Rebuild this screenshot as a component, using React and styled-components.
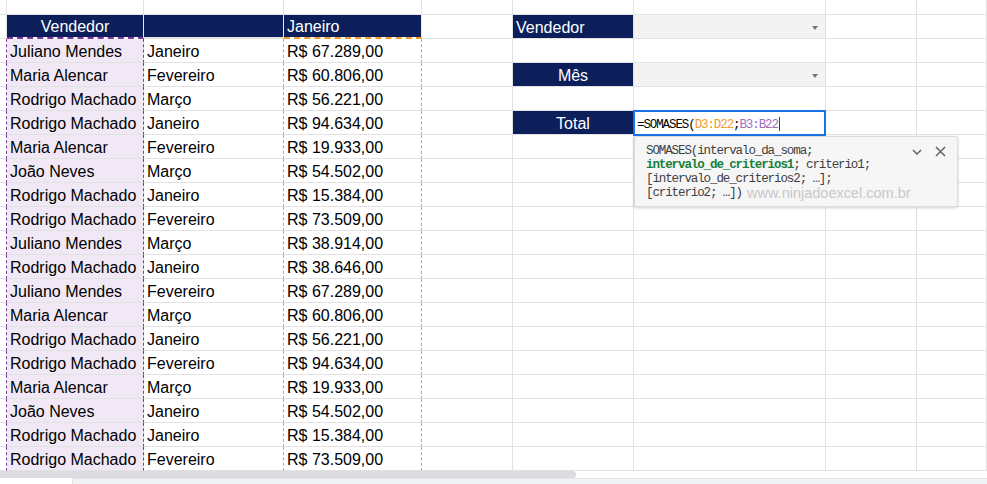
import React from 'react';
import styled, { createGlobalStyle } from 'styled-components';

const GRID = '#e2e2e2';
const NAVY = '#0c1f5b';
const LAVENDER = '#f0e9f5';
const PURPLE = '#7a3a99';
const ORANGE = '#f39a26';
const MONO = '"Liberation Mono", "DejaVu Sans Mono", monospace';

const GlobalStyle = createGlobalStyle`
	html, body {
		margin: 0;
		padding: 0;
		background: #fff;
		overflow: hidden;
	}
	body {
		font-family: "Liberation Sans", Arial, sans-serif;
	}
`;

const Page = styled.div`
	width: 987px;
	height: 484px;
	display: flex;
	flex-direction: column;
	overflow: hidden;
`;

const Sheet = styled.div`
	height: 471px;
	flex: none;
	display: grid;
	grid-template-columns: 7px 137px 140px 138px 91px 121px 192px 91px 70px;
	grid-template-rows: 15px 24px repeat(18, 24px);
	overflow: hidden;
`;

const Cell = styled.div`
	box-sizing: border-box;
	display: flex;
	align-items: flex-end;
	justify-content: ${props => props.$align === 'center' ? 'center' : 'flex-start'};
	padding: 0 3px 1px;
	border-right: 1px ${props => props.$edge ? `dashed ${props.$edge}` : `solid ${GRID}`};
	border-bottom: 1px solid ${GRID};
	background: ${props => props.$fill || 'transparent'};
	color: #000;
	font-size: 16px;
	line-height: 18px;
	white-space: nowrap;
	overflow: hidden;
`;

const NameCell = styled(Cell)`
	background: ${LAVENDER};
	border-right: 1px dashed ${PURPLE};
`;

const HeaderCell = styled(Cell)`
	background: ${NAVY};
	background-clip: padding-box;
	color: #fff;
	border-right-color: #e9e9ee;
	border-bottom: 2px ${props => props.$mark ? `dashed ${props.$mark}` : `solid ${GRID}`};
`;

const LabelCell = styled(Cell)`
	background: ${NAVY};
	color: #fff;
`;

const DropdownCell = styled(Cell)`
	background: #f3f3f3;
	justify-content: flex-end;
	align-items: center;
	padding: 3px 7px 0 0;
`;

const Arrow = styled.span`
	width: 0;
	height: 0;
	border-left: 3.5px solid transparent;
	border-right: 3.5px solid transparent;
	border-top: 4px solid #777;
`;

const FormulaCell = styled(Cell)`
	position: relative;
	overflow: visible;
	margin: -1px 0 -1px -1px;
	border: 2px solid #1a73e8;
	background: #fff;
	align-items: center;
	padding: 2px 0 0 2px;
	z-index: 3;
`;

const Code = styled.span`
	font-family: ${MONO};
	font-size: 12.5px;
	letter-spacing: -1.1px;
	color: ${props => props.$color || '#000'};
	font-weight: ${props => props.$bold ? 700 : 400};
`;

const Caret = styled.span`
	display: inline-block;
	width: 1px;
	height: 14px;
	margin-left: 1px;
	background: #5b2d7a;
	vertical-align: -3px;
`;

const Tooltip = styled.div`
	position: absolute;
	top: calc(100% + 2px);
	left: -1px;
	width: 324px;
	height: 71px;
	box-sizing: border-box;
	padding: 7px 11px;
	background: #f6f6f6;
	border: 1px solid #dcdcdc;
	border-radius: 2px;
	box-shadow: 0 1px 3px rgba(0, 0, 0, 0.18);
	font-family: ${MONO};
	font-size: 12.5px;
	line-height: 14px;
	letter-spacing: -1.1px;
	color: #3c4043;
	white-space: pre;
`;

const Line = styled.div`
	height: 14px;
`;

const TooltipIcons = styled.div`
	position: absolute;
	top: 9px;
	right: 11px;
	display: flex;
	align-items: center;
	gap: 13px;
`;

const Watermark = styled.span`
	position: absolute;
	left: 112px;
	top: 48px;
	font-family: "Liberation Sans", Arial, sans-serif;
	font-size: 14.5px;
	line-height: 16px;
	letter-spacing: 0;
	color: #c8c8c8;
`;

const ScrollTrack = styled.div`
	height: 7px;
	flex: none;
	display: flex;
	background: #fff;
`;

const Thumb = styled.div`
	width: 576px;
	height: 7px;
	background: #dadce0;
	border-radius: 0 4px 4px 0;
`;

const TabBar = styled.div`
	flex: 1;
	display: flex;
`;

const ActiveTab = styled.div`
	width: 72px;
	background: #fff;
`;

const TabRest = styled.div`
	flex: 1;
	background: #f1f3f4;
	border-top: 1px solid #e3e3e3;
	border-left: 1px solid #e3e3e3;
`;

const sales = [
	['Juliano Mendes', 'Janeiro', 'R$ 67.289,00'],
	['Maria Alencar', 'Fevereiro', 'R$ 60.806,00'],
	['Rodrigo Machado', 'Março', 'R$ 56.221,00'],
	['Rodrigo Machado', 'Janeiro', 'R$ 94.634,00'],
	['Maria Alencar', 'Fevereiro', 'R$ 19.933,00'],
	['João Neves', 'Março', 'R$ 54.502,00'],
	['Rodrigo Machado', 'Janeiro', 'R$ 15.384,00'],
	['Rodrigo Machado', 'Fevereiro', 'R$ 73.509,00'],
	['Juliano Mendes', 'Março', 'R$ 38.914,00'],
	['Rodrigo Machado', 'Janeiro', 'R$ 38.646,00'],
	['Juliano Mendes', 'Fevereiro', 'R$ 67.289,00'],
	['Maria Alencar', 'Março', 'R$ 60.806,00'],
	['Rodrigo Machado', 'Janeiro', 'R$ 56.221,00'],
	['Rodrigo Machado', 'Fevereiro', 'R$ 94.634,00'],
	['Maria Alencar', 'Março', 'R$ 19.933,00'],
	['João Neves', 'Janeiro', 'R$ 54.502,00'],
	['Rodrigo Machado', 'Janeiro', 'R$ 15.384,00'],
	['Rodrigo Machado', 'Fevereiro', 'R$ 73.509,00'],
];

// right hand filter panel, keyed by sheet row number
const filters = {
	2: { label: 'Vendedor', align: 'left', kind: 'dropdown' },
	4: { label: 'Mês', align: 'center', kind: 'dropdown' },
	6: { label: 'Total', align: 'center', kind: 'formula' },
};

const ChevronIcon = () => (
	<svg width="10" height="6" viewBox="0 0 10 6">
		<path d="M1 1l4 4 4-4" fill="none" stroke="#5f6368" strokeWidth="1.5" />
	</svg>
);

const CloseIcon = () => (
	<svg width="11" height="11" viewBox="0 0 11 11">
		<path d="M1 1l9 9M10 1l-9 9" fill="none" stroke="#5f6368" strokeWidth="1.5" />
	</svg>
);

const Formula = () => (
	<FormulaCell>
		<span>
			<Code>=SOMASES(</Code>
			<Code $color="#f29b2d">D3:D22</Code>
			<Code>;</Code>
			<Code $color="#a06cc0">B3:B22</Code>
			<Caret />
		</span>
		<Tooltip>
			<Line>SOMASES(intervalo_da_soma;</Line>
			<Line><Code $color="#188038" $bold>intervalo_de_criterios1</Code>; criterio1;</Line>
			<Line>[intervalo_de_criterios2; …];</Line>
			<Line>[criterio2; …])</Line>
			<TooltipIcons>
				<ChevronIcon />
				<CloseIcon />
			</TooltipIcons>
			<Watermark>www.ninjadoexcel.com.br</Watermark>
		</Tooltip>
	</FormulaCell>
);

const renderPanel = (row) => {
	const filter = filters[row];
	if (!filter) {
		return [<Cell key="f" />, <Cell key="g" />];
	}
	return [
		<LabelCell key="f" $align={filter.align}>{filter.label}</LabelCell>,
		filter.kind === 'dropdown'
			? <DropdownCell key="g"><Arrow /></DropdownCell>
			: <Formula key="g" />,
	];
};

const renderRow = (row) => {
	if (row === 1) {
		return Array.from({ length: 9 }, (_, i) => <Cell key={`1-${i}`} />);
	}
	if (row === 2) {
		return [
			<Cell key="a" />,
			<HeaderCell key="b" $align="center" $mark={PURPLE}>Vendedor</HeaderCell>,
			<HeaderCell key="c" />,
			<HeaderCell key="d" $mark={ORANGE}>Janeiro</HeaderCell>,
			<Cell key="e" />,
			...renderPanel(row),
			<Cell key="h" />,
			<Cell key="i" />,
		];
	}
	const [name, month, value] = sales[row - 3];
	return [
		<Cell key="a" $edge={PURPLE} />,
		<NameCell key="b">{name}</NameCell>,
		<Cell key="c" $edge={ORANGE}>{month}</Cell>,
		<Cell key="d" $edge={ORANGE}>{value}</Cell>,
		<Cell key="e" />,
		...renderPanel(row),
		<Cell key="h" />,
		<Cell key="i" />,
	];
};

export default function App() {
	const rows = Array.from({ length: 20 }, (_, i) => i + 1);
	return (
		<Page>
			<GlobalStyle />
			<Sheet>
				{rows.map(row => (
					<React.Fragment key={row}>{renderRow(row)}</React.Fragment>
				))}
			</Sheet>
			<ScrollTrack>
				<Thumb />
			</ScrollTrack>
			<TabBar>
				<ActiveTab />
				<TabRest />
			</TabBar>
		</Page>
	);
}
